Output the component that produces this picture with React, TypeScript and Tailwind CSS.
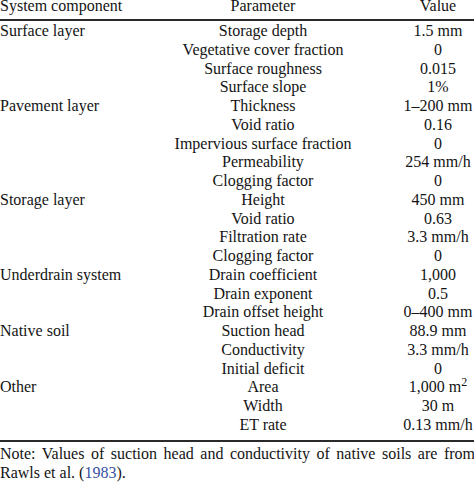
const rows: [string, string, React.ReactNode][] = [
  ['Surface layer', 'Storage depth', '1.5 mm'],
  ['', 'Vegetative cover fraction', '0'],
  ['', 'Surface roughness', '0.015'],
  ['', 'Surface slope', '1%'],
  ['Pavement layer', 'Thickness', '1–200 mm'],
  ['', 'Void ratio', '0.16'],
  ['', 'Impervious surface fraction', '0'],
  ['', 'Permeability', '254 mm/h'],
  ['', 'Clogging factor', '0'],
  ['Storage layer', 'Height', '450 mm'],
  ['', 'Void ratio', '0.63'],
  ['', 'Filtration rate', '3.3 mm/h'],
  ['', 'Clogging factor', '0'],
  ['Underdrain system', 'Drain coefficient', '1,000'],
  ['', 'Drain exponent', '0.5'],
  ['', 'Drain offset height', '0–400 mm'],
  ['Native soil', 'Suction head', '88.9 mm'],
  ['', 'Conductivity', '3.3 mm/h'],
  ['', 'Initial deficit', '0'],
  [
    'Other',
    'Area',
    <>
      1,000 m<sup>2</sup>
    </>,
  ],
  ['', 'Width', '30 m'],
  ['', 'ET rate', '0.13 mm/h'],
];

export default function App() {
  return (
    <div className="w-[474px] h-[483px] overflow-hidden bg-white text-[#141414] text-[16px] font-['Liberation_Serif',serif]">
      {/* Header */}
      <div className="w-[513px] grid grid-cols-[163px_200px_150px] leading-[18.75px] -mt-[3px] pb-[3px] border-b-2 border-[#2a2a2a]">
        <div className="whitespace-nowrap">System component</div>
        <div className="flex justify-center whitespace-nowrap">Parameter</div>
        <div className="flex justify-center whitespace-nowrap">Value</div>
      </div>

      {/* Body */}
      <div className="w-[513px] pt-[1.25px] pb-[5px] border-b-2 border-[#2a2a2a] leading-[18.75px]">
        {rows.map(([component, param, value], i) => (
          <div key={i} className="grid grid-cols-[163px_200px_150px] h-[18.75px]">
            <div className="whitespace-nowrap">{component}</div>
            <div className="flex justify-center whitespace-nowrap">{param}</div>
            <div className="flex justify-center whitespace-nowrap">
              <span>{value}</span>
            </div>
          </div>
        ))}
      </div>

      {/* Note */}
      <p className="w-[475px] mt-[2.5px] leading-[19px] text-justify">
        Note: Values of suction head and conductivity of native soils are from Rawls et al. (
        <span className="text-[#3550a0]">1983</span>).
      </p>
    </div>
  );
}
